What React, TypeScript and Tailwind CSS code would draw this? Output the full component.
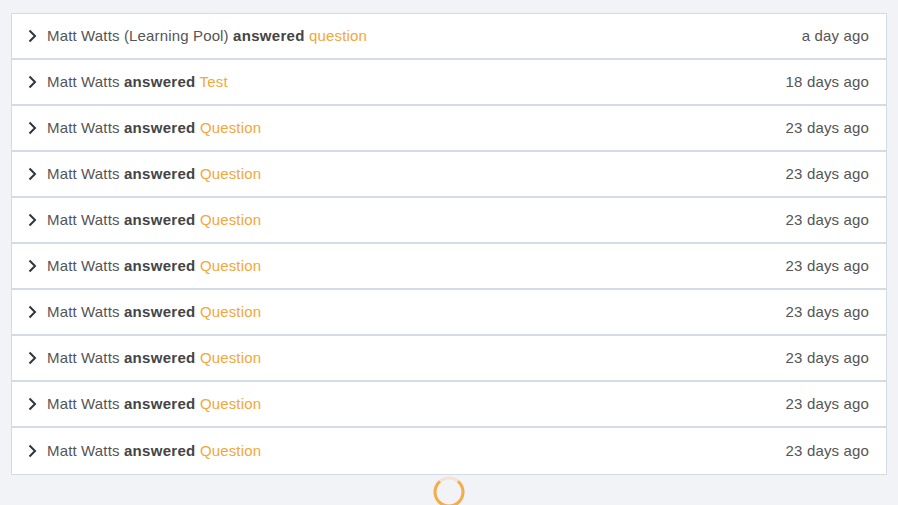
const rows = [
  { who: 'Matt Watts (Learning Pool)', what: 'question', when: 'a day ago' },
  { who: 'Matt Watts', what: 'Test', when: '18 days ago' },
  ...Array.from({ length: 8 }, () => ({ who: 'Matt Watts', what: 'Question', when: '23 days ago' })),
]

function Chevron() {
  return (
    <svg width="10" height="14" viewBox="0 0 10 14" className="shrink-0">
      <polyline points="2.5,1.5 8,7 2.5,12.5" fill="none" stroke="#2f3540" strokeWidth="2" />
    </svg>
  )
}

export default function App() {
  return (
    <div className="min-h-screen bg-[#f1f3f7] pt-[13px] font-['Liberation_Sans',Arial,sans-serif]">
      <div className="ml-[11px] w-[876px] border border-[#d3dce4] bg-white">
        {rows.map((r, i) => (
          <div
            key={i}
            className={`flex h-[46px] items-center pl-[15px] pr-[17px] text-[15px] tracking-[0.15px] text-[#555] ${
              i < rows.length - 1 ? 'border-b-2 border-[#d3dce4]' : ''
            }`}
          >
            <Chevron />
            <span className="ml-[10px]">
              {r.who} <b className="font-bold tracking-[0.3px] text-[#444]">answered</b>{' '}
              <span className="text-[#f2a83a]">{r.what}</span>
            </span>
            <span className="ml-auto text-[#555]">{r.when}</span>
          </div>
        ))}
      </div>
      <div className="flex justify-center">
        <svg width="34" height="34" viewBox="0 0 34 34">
          <circle cx="17" cy="17" r="14" fill="none" stroke="#f2e2d8" strokeWidth="3" />
          <path d="M 8 6.3 A 14 14 0 1 0 26 6.3" fill="none" stroke="#f3ad4a" strokeWidth="3" />
        </svg>
      </div>
    </div>
  )
}
